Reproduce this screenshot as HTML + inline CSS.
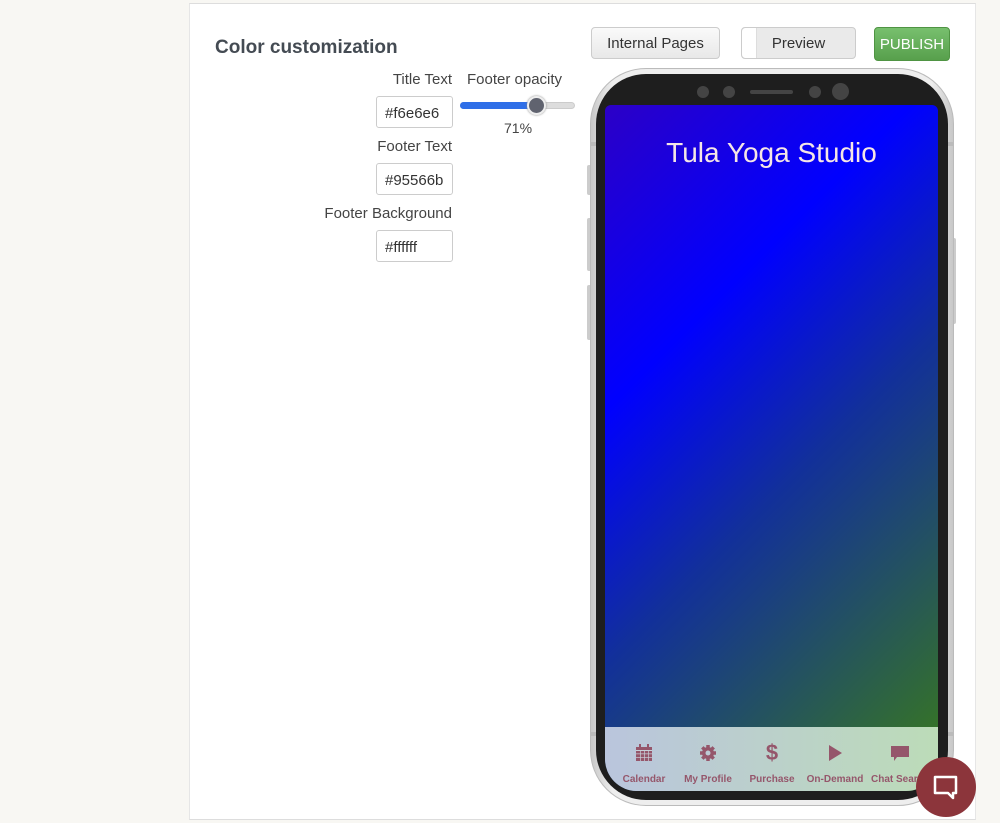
<!DOCTYPE html>
<html><head><meta charset="utf-8"><style>
*{box-sizing:border-box;margin:0;padding:0}
body{width:1000px;height:823px;background:#f8f7f3;font-family:"Liberation Sans",sans-serif;position:relative;overflow:hidden}
.panel{position:absolute;left:189px;top:3px;width:787px;height:817px;background:#fff;border-left:1px solid #e6e6e6;border-top:1px solid #ddd;border-bottom:1px solid #ddd;border-right:1px solid #e6e6e6}
.abs{position:absolute}
h2{position:absolute;left:215px;top:37px;font-size:19px;font-weight:bold;color:#444b53}
.lbl{position:absolute;font-size:15px;color:#444;text-align:right}
.inp{position:absolute;left:376px;width:77px;height:32px;border:1px solid #ccc;border-radius:3px;font-size:15px;color:#333;padding:8px 0 0 8px}
.btn{position:absolute;top:27px;height:32px;border:1px solid #ccc;border-radius:4px;background:linear-gradient(#fafafa,#e8e8e8);font-size:15px;color:#333;text-align:center;line-height:30px}
.ft{position:absolute;top:744px;width:60px;text-align:center;color:#95566b;font-size:10px;font-weight:bold}
.ft svg{display:block;margin:0 auto 12px}
</style></head><body>
<div class="panel"></div>
<h2>Color customization</h2>
<div class="lbl" style="right:548px;top:71px">Title Text</div>
<div class="inp" style="top:96px">#f6e6e6</div>
<div class="lbl" style="right:548px;top:138px">Footer Text</div>
<div class="inp" style="top:163px">#95566b</div>
<div class="lbl" style="right:548px;top:205px">Footer Background</div>
<div class="inp" style="top:230px">#ffffff</div>
<div class="lbl" style="left:467px;top:71px">Footer opacity</div>
<div class="abs" style="left:460px;top:102px;width:115px;height:7px;border-radius:4px;background:#ddd;border:1px solid #ccc"></div>
<div class="abs" style="left:460px;top:102px;width:78px;height:7px;border-radius:4px;background:#2f6fe8"></div>
<div class="abs" style="left:527px;top:96px;width:19px;height:19px;border-radius:50%;background:#60636f;border:2px solid #eee;box-shadow:0 0 2px #888"></div>
<div class="abs" style="left:504px;top:120px;font-size:14px;color:#444">71%</div>
<div class="btn" style="left:591px;width:129px;line-height:32px">Internal Pages</div>
<div class="btn" style="left:741px;width:115px;background:#eaeaea;line-height:32px">Preview<div class="abs" style="left:0;top:0;width:15px;height:30px;background:#fff;border-radius:4px 0 0 4px;border-right:1px solid #ddd"></div></div>
<div class="btn" style="left:874px;top:27px;width:76px;height:34px;background:linear-gradient(#78c06e,#58a04c);border-color:#4f9443;color:#fff;line-height:34px">PUBLISH</div>
<!-- phone -->
<div class="abs" style="left:587px;top:165px;width:5px;height:30px;background:#ccc;border-radius:2px"></div>
<div class="abs" style="left:587px;top:218px;width:5px;height:53px;background:#ccc;border-radius:2px"></div>
<div class="abs" style="left:587px;top:285px;width:5px;height:55px;background:#ccc;border-radius:2px"></div>
<div class="abs" style="left:951px;top:238px;width:5px;height:86px;background:#ccc;border-radius:2px"></div>
<div class="abs" style="left:590px;top:68px;width:364px;height:738px;border-radius:56px;background:linear-gradient(90deg,#c8c8c8,#eee 6%,#eee 94%,#c8c8c8);border:1px solid #bbb"></div>
<div class="abs" style="left:590px;top:142px;width:364px;height:4px;background:#bbb"></div>
<div class="abs" style="left:590px;top:732px;width:364px;height:4px;background:#bbb"></div>
<div class="abs" style="left:596px;top:74px;width:352px;height:726px;border-radius:50px;background:#1e1e1e"></div>
<div class="abs" style="left:605px;top:105px;width:333px;height:686px;border-radius:6px 6px 32px 32px;overflow:hidden;background:linear-gradient(135deg,#2c00c6 0%,#0000ff 30%,#12309a 55%,#3a7c18 100%)">
<div class="abs" style="left:0;top:622px;width:333px;height:64px;background:linear-gradient(to right,#bac5dd,#bcdcb8)"></div>
</div>
<div class="abs" style="left:697px;top:86px;width:12px;height:12px;border-radius:50%;background:#444"></div>
<div class="abs" style="left:723px;top:86px;width:12px;height:12px;border-radius:50%;background:#444"></div>
<div class="abs" style="left:750px;top:90px;width:43px;height:4px;border-radius:2px;background:#444"></div>
<div class="abs" style="left:809px;top:86px;width:12px;height:12px;border-radius:50%;background:#444"></div>
<div class="abs" style="left:832px;top:83px;width:17px;height:17px;border-radius:50%;background:#444"></div>
<div class="abs" style="left:605px;top:137px;width:333px;text-align:center;color:#f6e6e6;font-size:28px">Tula Yoga Studio</div>
<div class="ft" style="left:614px"><svg width="18" height="18" viewBox="0 0 18 18"><rect x="1" y="3" width="16" height="14" fill="#95566b"/><rect x="4" y="0" width="2" height="4" fill="#95566b"/><rect x="12" y="0" width="2" height="4" fill="#95566b"/><g fill="#c8cfd8"><rect x="1" y="6" width="16" height="1"/><rect x="1" y="9.5" width="16" height="0.7"/><rect x="1" y="13" width="16" height="0.7"/><rect x="5" y="7" width="0.7" height="10"/><rect x="9" y="7" width="0.7" height="10"/><rect x="13" y="7" width="0.7" height="10"/></g></svg>Calendar</div>
<div class="ft" style="left:678px"><svg width="18" height="18" viewBox="0 0 18 18"><circle cx="9" cy="9" r="6" fill="#95566b"/><g stroke="#95566b" stroke-width="3.5"><line x1="9" y1="1" x2="9" y2="17"/><line x1="1" y1="9" x2="17" y2="9"/><line x1="3.3" y1="3.3" x2="14.7" y2="14.7"/><line x1="14.7" y1="3.3" x2="3.3" y2="14.7"/></g><circle cx="9" cy="9" r="2.5" fill="#bdcad5"/></svg>My Profile</div>
<div class="ft" style="left:742px"><div style="font-size:22px;height:30px;line-height:18px;font-weight:bold">$</div>Purchase</div>
<div class="ft" style="left:805px"><svg width="18" height="18" viewBox="0 0 18 18"><path d="M3 1 L16 9 L3 17Z" fill="#95566b"/></svg>On-Demand</div>
<div class="ft" style="left:868px;width:70px;overflow:hidden;white-space:nowrap;text-align:left;padding-left:3px"><svg width="20" height="18" viewBox="0 0 20 18" style="margin:0 0 12px 19px"><path d="M1 2h18v11H7l-3 4v-4H1Z" fill="#95566b"/></svg>Chat Search</div>
<div class="abs" style="left:916px;top:757px;width:60px;height:60px;border-radius:50%;background:#8c353b"></div>
<svg class="abs" style="left:932px;top:774px" width="28" height="26" viewBox="0 0 28 26"><path d="M3 3h21v16h-3v5l-5-5H3Z" fill="none" stroke="#fff" stroke-width="2.5" stroke-linejoin="round"/></svg>
</body></html>
